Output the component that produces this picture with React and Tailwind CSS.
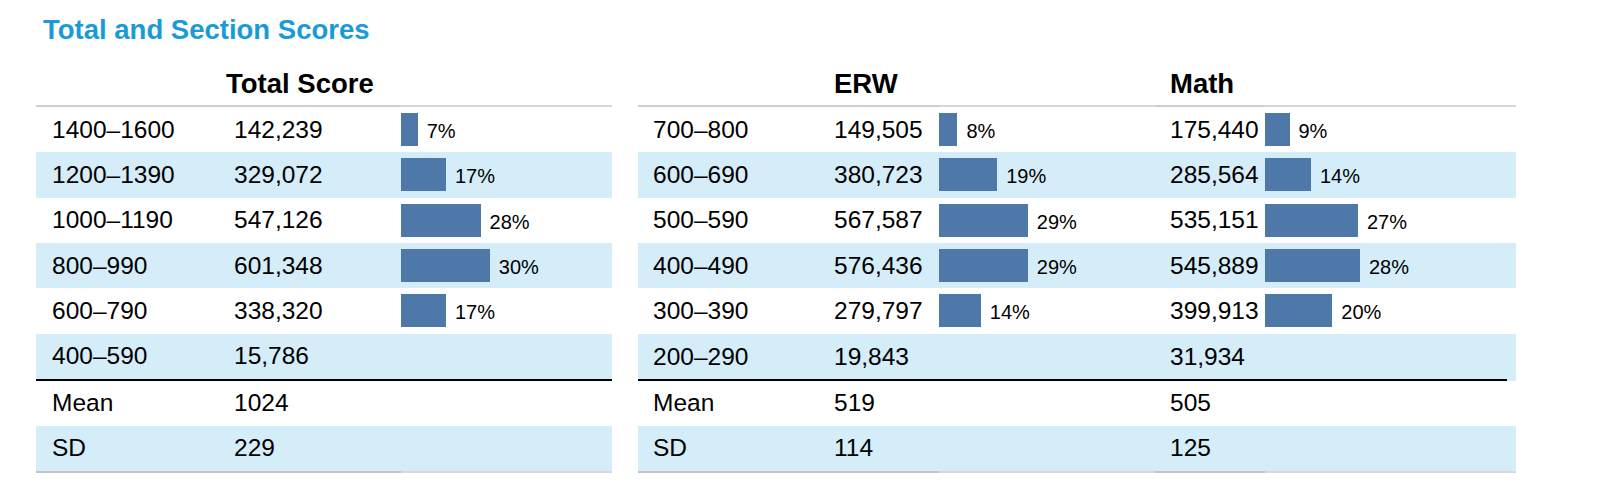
import React from "react";

const leftRows = [
  ["1400–1600", "142,239", 16.7, "7%"],
  ["1200–1390", "329,072", 45, "17%"],
  ["1000–1190", "547,126", 79.6, "28%"],
  ["800–990", "601,348", 88.8, "30%"],
  ["600–790", "338,320", 45, "17%"],
  ["400–590", "15,786", null, null],
];

const rightRows = [
  ["700–800", "149,505", 18.4, "8%", "175,440", 24.5, "9%"],
  ["600–690", "380,723", 58.2, "19%", "285,564", 46, "14%"],
  ["500–590", "567,587", 88.8, "29%", "535,151", 92.9, "27%"],
  ["400–490", "576,436", 88.8, "29%", "545,889", 95, "28%"],
  ["300–390", "279,797", 41.8, "14%", "399,913", 67.3, "20%"],
  ["200–290", "19,843", null, null, "31,934", null, null],
];

function Bar({ w, label }) {
  if (w == null) return null;
  return (
    <div className="flex items-center h-full">
      <div className="h-[33px] bg-[#4e78a7]" style={{ width: w }} />
      <span className="ml-[9px] text-[20px] leading-[20px] mt-[3px]">{label}</span>
    </div>
  );
}

function rowBg(i) {
  return i % 2 === 1 ? "bg-[#d4edf9]" : "bg-white";
}

function LeftTable() {
  return (
    <div className="w-[576px] ml-[36px]">
      <div className="flex h-[36px]">
        <div className="w-[365px] border-b-2 border-[#cdcdcd] pl-[190px] text-[27.5px] leading-[26px] font-bold">
          Total Score
        </div>
        <div className="flex-1 border-b-2 border-[#d6d6d6]" />
      </div>
      {leftRows.map((r, i) => (
        <div key={i} className={`flex items-center ${rowBg(i)} ${i === 5 ? "border-b-2 border-black h-[47.33px]" : "h-[45.33px]"}`}>
          <div className="w-[198px] pl-[16px]">{r[0]}</div>
          <div className="w-[167px]">{r[1]}</div>
          <div className="flex-1 h-full">
            <Bar w={r[2]} label={r[3]} />
          </div>
        </div>
      ))}
      <div className="flex h-[45px] items-center">
        <div className="w-[198px] pl-[16px]">Mean</div>
        <div className="w-[167px]">1024</div>
        <div className="flex-1" />
      </div>
      <div className="flex h-[47px] bg-[#d4edf9]">
        <div className="w-[198px] pl-[16px] flex items-center border-b-2 border-[#c4c4c4]">SD</div>
        <div className="w-[167px] flex items-center border-b-2 border-[#c4c4c4]">229</div>
        <div className="flex-1 border-b-2 border-[#d8d8d8]" />
      </div>
    </div>
  );
}

function RightTable() {
  return (
    <div className="w-[878px] ml-[26px]">
      <div className="flex h-[36px] text-[27.5px] leading-[26px] font-bold">
        <div className="w-[196px] border-b-2 border-[#cdcdcd]" />
        <div className="w-[105px] border-b-2 border-[#cdcdcd]">ERW</div>
        <div className="w-[216px] border-b-2 border-[#d6d6d6]" />
        <div className="w-[110px] pl-[15px] border-b-2 border-[#cdcdcd]">Math</div>
        <div className="flex-1 border-b-2 border-[#d6d6d6]" />
      </div>
      {rightRows.map((r, i) => (
        <div key={i} className={`flex items-center ${rowBg(i)} ${i === 5 ? "h-[47.33px]" : "h-[45.33px]"} relative`}>
          <div className="w-[196px] pl-[15px]">{r[0]}</div>
          <div className="w-[105px]">{r[1]}</div>
          <div className="w-[216px] h-full">
            <Bar w={r[2]} label={r[3]} />
          </div>
          <div className="w-[110px] pl-[15px]">{r[4]}</div>
          <div className="flex-1 h-full">
            <Bar w={r[5]} label={r[6]} />
          </div>
          {i === 5 && <div className="absolute left-0 bottom-0 h-[2px] w-[869px] bg-black" />}
        </div>
      ))}
      <div className="flex h-[45px] items-center">
        <div className="w-[196px] pl-[15px]">Mean</div>
        <div className="w-[105px]">519</div>
        <div className="w-[216px]" />
        <div className="w-[110px] pl-[15px]">505</div>
        <div className="flex-1" />
      </div>
      <div className="flex h-[47px] bg-[#d4edf9]">
        <div className="w-[196px] pl-[15px] flex items-center border-b-2 border-[#c4c4c4]">SD</div>
        <div className="w-[105px] flex items-center border-b-2 border-[#c4c4c4]">114</div>
        <div className="w-[216px] border-b-2 border-[#d8d8d8]" />
        <div className="w-[110px] pl-[15px] flex items-center border-b-2 border-[#c4c4c4]">125</div>
        <div className="flex-1 border-b-2 border-[#d8d8d8]" />
      </div>
    </div>
  );
}

export default function App() {
  return (
    <div className="w-[1600px] h-[490px] bg-white overflow-hidden font-['Liberation_Sans',Arial,sans-serif] text-black text-[24.5px] leading-[28px] pt-[17px]">
      <div className="pl-[43px] text-[27.5px] leading-[26px] font-bold text-[#1a9ad6]">
        Total and Section Scores
      </div>
      <div className="flex mt-[28px]">
        <LeftTable />
        <RightTable />
      </div>
    </div>
  );
}
